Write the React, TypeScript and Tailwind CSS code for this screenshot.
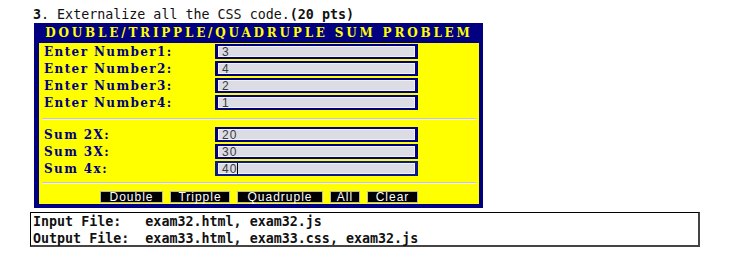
import React from 'react'

const NUMBERS = [
  { label: 'Enter Number1:', value: '3' },
  { label: 'Enter Number2:', value: '4' },
  { label: 'Enter Number3:', value: '2' },
  { label: 'Enter Number4:', value: '1' },
]

const SUMS = [
  { label: 'Sum 2X:', value: '20' },
  { label: 'Sum 3X:', value: '30' },
  { label: 'Sum 4x:', value: '40', focused: true },
]

const BUTTONS = [
  { text: 'Double', w: 'w-[63px]' },
  { text: 'Tripple', w: 'w-[60px]' },
  { text: 'Quadruple', w: 'w-[86px]' },
  { text: 'All', w: 'w-[30px]' },
  { text: 'Clear', w: 'w-[51px]' },
]

function Field({ value, focused }: { value: string; focused?: boolean }) {
  return (
    <div className={`ml-[171px] w-[203px] h-[15px] border-x-[3px] border-y-2 ${focused ? 'border-[#0a1a8c]' : 'border-[#000080]'}`}>
      <div className="h-full border border-[#f2f2f8] bg-[#dcdce4] flex items-center pl-[3px] text-[12px] leading-none tracking-[1.2px] text-[#3a3a3a] font-['Liberation_Sans',Arial,sans-serif]">
        {value}
        {focused && <span className="inline-block w-px h-[11px] bg-black -ml-[1px]" />}
      </div>
    </div>
  )
}

function Row({ label, value, focused }: { label: string; value: string; focused?: boolean }) {
  return (
    <div className="h-[17px] flex items-center">
      <div className="w-0 pl-[5px] whitespace-nowrap text-[12px] leading-none font-bold tracking-[1.4px] text-[#000080] font-['DejaVu_Serif',serif]">
        {label}
      </div>
      <Field value={value} focused={focused} />
    </div>
  )
}

export default function App() {
  return (
    <div className="w-[729px] h-[255px] bg-white font-['DejaVu_Sans_Mono',monospace] text-[13.33px] text-[#111]">
      <div className="pt-[7px] pl-[33px] leading-[16px] whitespace-pre">
        <span className="font-bold">3</span>. Externalize all the CSS code.<span className="font-bold">(20 pts)</span>
      </div>

      <div className="ml-[34px] w-[449px] bg-[#000080] pl-[5px] pr-[4px] pb-[4px]">
        <div className="h-[20px] flex items-center justify-center text-[12px] font-bold tracking-[2.8px] text-[#ffff00] font-['DejaVu_Serif',serif] whitespace-nowrap">
          DOUBLE/TRIPPLE/QUADRUPLE SUM PROBLEM
        </div>
        <div className="bg-[#ffff00] pb-px">
          {NUMBERS.map(n => <Row key={n.label} label={n.label} value={n.value} />)}
          <div className="mx-[3px] mt-[7px] mb-[6px] border-t border-[#c8c8b4] border-b border-b-[#f4f4d0]" />
          {SUMS.map(s => <Row key={s.label} label={s.label} value={s.value} focused={s.focused} />)}
          <div className="mx-[3px] mt-[5px] mb-[7px] border-t border-[#c8c8b4] border-b border-b-[#f4f4d0]" />
          <div className="flex justify-center gap-[7px]">
            {BUTTONS.map(b => (
              <div
                key={b.text}
                className={`${b.w} h-[12px] bg-black border border-[#b8b8b8] flex items-center justify-center text-white text-[12px] leading-none tracking-[1px] font-['Liberation_Sans',Arial,sans-serif]`}
              >
                {b.text}
              </div>
            ))}
          </div>
        </div>
      </div>

      <div className="mt-[4px] ml-[30px] w-[670px] h-[35px] border-t border-l border-black border-r-2 border-b-2 border-r-[#444] border-b-[#444] pl-[2px] font-bold leading-[17px] whitespace-pre">
        <div>Input File:   exam32.html, exam32.js</div>
        <div>Output File:  exam33.html, exam33.css, exam32.js</div>
      </div>
    </div>
  )
}
